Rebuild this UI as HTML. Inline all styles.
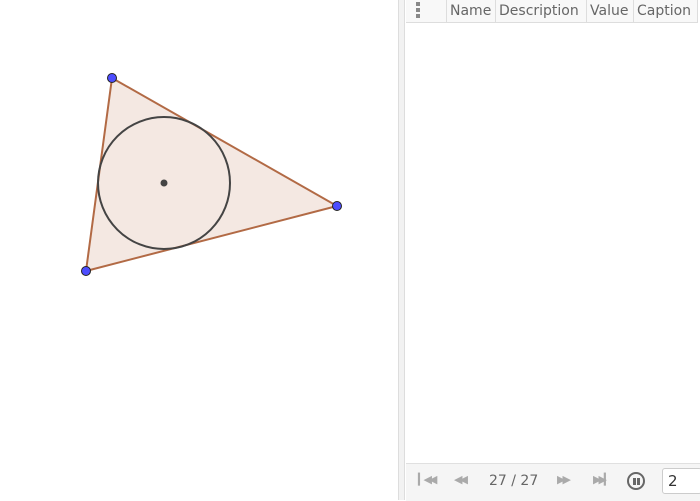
<!DOCTYPE html><html><head><style>
body{margin:0;width:700px;height:500px;overflow:hidden;background:#fff;font-family:"DejaVu Sans","Liberation Sans",sans-serif;position:relative}
.a{position:absolute}
.h{top:0;height:23px;border-bottom:1px solid #ddd;border-right:1px solid #ddd;background:#f8f8f8;color:#666;font-size:14px;line-height:23px;box-sizing:border-box;padding-left:3px}
</style></head><body>
<svg class="a" style="left:0;top:0" width="398" height="500">
<polygon points="112,78 337,206 86,271" fill="#f4e8e2" stroke="#b26a45" stroke-width="2"/>
<circle cx="164" cy="183" r="66" fill="none" stroke="#444" stroke-width="2"/>
<circle cx="164" cy="183" r="3.5" fill="#444"/>
<circle cx="112" cy="78" r="4.5" fill="#4d4dff" stroke="#222" stroke-width="1"/>
<circle cx="337" cy="206" r="4.5" fill="#4d4dff" stroke="#222" stroke-width="1"/>
<circle cx="86" cy="271" r="4.5" fill="#4d4dff" stroke="#222" stroke-width="1"/>
</svg>
<div class="a" style="left:398px;top:0;width:7px;height:500px;background:#f2f2f2;border-left:1px solid #ddd;border-right:1px solid #ddd;box-sizing:border-box"></div>
<div class="a h" style="left:406px;width:41px"><span style="position:absolute;left:10px;top:2px;width:4px;height:16px;background:repeating-linear-gradient(#888 0 4px,transparent 4px 6px)"></span></div>
<div class="a h" style="left:447px;width:49px">Name</div>
<div class="a h" style="left:496px;width:91px">Description</div>
<div class="a h" style="left:587px;width:47px">Value</div>
<div class="a h" style="left:634px;width:64px">Caption</div>
<div class="a" style="left:406px;top:463px;width:294px;height:37px;background:#f5f5f5;border-top:1px solid #e0e0e0;color:#666;font-size:14px">
<span class="a" style="left:12px;top:9px;color:#aaa;font-size:11px;letter-spacing:-3px">▎◀◀</span>
<span class="a" style="left:48px;top:9px;color:#aaa;font-size:11px;letter-spacing:-3px">◀◀</span>
<span class="a" style="left:83px;top:9px">27 / 27</span>
<span class="a" style="left:151px;top:9px;color:#aaa;font-size:11px;letter-spacing:-3px">▶▶</span>
<span class="a" style="left:187px;top:9px;color:#aaa;font-size:11px;letter-spacing:-3px">▶▶▎</span>
<span class="a" style="left:221px;top:8px;width:18px;height:18px;border:2px solid #666;border-radius:50%;box-sizing:border-box"><span class="a" style="left:4px;top:4px;width:3px;height:7px;background:#666"></span><span class="a" style="left:8px;top:4px;width:3px;height:7px;background:#666"></span></span>
<span class="a" style="left:256px;top:4px;width:40px;height:26px;border:1px solid #ccc;border-radius:3px;background:#fff;padding-left:5px;line-height:24px;box-sizing:border-box;font-size:15px;color:#333">2</span>
</div>
</body></html>
